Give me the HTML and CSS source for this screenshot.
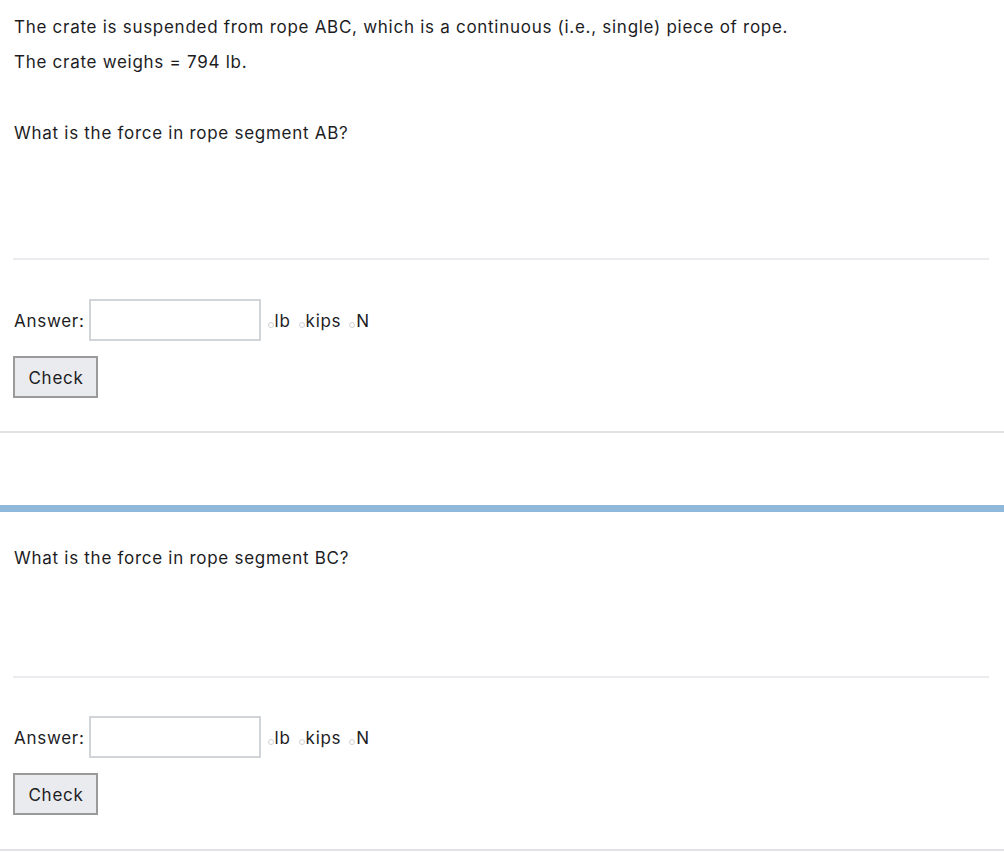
FILE: index.html
```html
<!DOCTYPE html>
<html>
<head>
<meta charset="utf-8">
<link rel="stylesheet" href="styles.css">
</head>
<body>
<div class="intro">
  <p class="line">The crate is suspended from rope ABC, which is a continuous (i.e., single) piece of rope.</p>
  <p class="line second">The crate weighs = 794 lb.</p>
</div>
<div class="part first-part">
  <div class="inner">
    <p class="line question">What is the force in rope segment AB?</p>
    <div class="divider"></div>
    <div class="answer-row">
      <label class="answer-label">Answer:</label>
      <input class="answer-input" type="text">
      <span class="units">
        <span class="unit"><input type="radio" name="u1" class="radio">lb</span>
        <span class="unit"><input type="radio" name="u1" class="radio">kips</span>
        <span class="unit"><input type="radio" name="u1" class="radio">N</span>
      </span>
    </div>
    <button class="check">Check</button>
  </div>
  <div class="full-rule"></div>
</div>
<div class="blue-bar"></div>
<div class="part second-part">
  <div class="inner">
    <p class="line question">What is the force in rope segment BC?</p>
    <div class="divider"></div>
    <div class="answer-row">
      <label class="answer-label">Answer:</label>
      <input class="answer-input" type="text">
      <span class="units">
        <span class="unit"><input type="radio" name="u2" class="radio">lb</span>
        <span class="unit"><input type="radio" name="u2" class="radio">kips</span>
        <span class="unit"><input type="radio" name="u2" class="radio">N</span>
      </span>
    </div>
    <button class="check">Check</button>
  </div>
  <div class="full-rule"></div>
</div>
</body>
</html>
```
FILE: styles.css
```css
html, body {
  margin: 0;
  padding: 0;
  background: #fff;
}
body {
  font-family: Inter, "Liberation Sans", sans-serif;
  font-size: 17px;
  letter-spacing: 0.72px;
  color: #1d1d1f;
}
.line {
  margin: 0;
  line-height: 22px;
  height: 20px;
  white-space: nowrap;
}
.intro {
  padding: 16px 14px 0;
}
.intro .second {
  margin-top: 15px;
}
.inner {
  padding: 0 15px 0 13px;
}
.first-part .question {
  margin-top: 51px;
  padding-left: 1px;
}
.first-part .divider {
  margin-top: 116px;
}
.divider {
  height: 2px;
  background: #ebecef;
}
.answer-row {
  display: flex;
  align-items: center;
  margin-top: 39px;
  height: 42px;
}
.answer-label {
  padding-left: 1px;
  padding-top: 2px;
  margin-right: 4px;
}
.answer-input {
  box-sizing: border-box;
  width: 172px;
  height: 42px;
  border: 2px solid #d1d5da;
  margin: 0;
  padding: 0 6px;
  font: inherit;
  outline: none;
}
.units {
  display: flex;
  align-items: center;
  margin-left: 7px;
  padding-top: 2px;
}
.unit {
  display: inline-flex;
  align-items: baseline;
  margin-right: 8px;
}
.radio {
  appearance: none;
  -webkit-appearance: none;
  box-sizing: border-box;
  width: 6px;
  height: 6px;
  margin: 0 1px 0 0;
  border: 1px solid #cfd2d6;
  border-radius: 50%;
  background: #fff;
  position: relative;
  top: 1px;
}
.check {
  display: block;
  box-sizing: border-box;
  margin: 15px 0 0;
  width: 85px;
  height: 42px;
  background: #eaebef;
  border: 2px solid #9a9a9a;
  border-radius: 0;
  font: inherit;
  letter-spacing: 0.72px;
  color: #1d1d1f;
  padding: 2px 0 0 1px;
}
.full-rule {
  height: 2px;
  background: #e0e2e5;
  margin-top: 33px;
}
.blue-bar {
  height: 7px;
  background: #8fb8db;
  margin-top: 72px;
}
.second-part .question {
  margin-top: 35px;
  padding-left: 1px;
}
.second-part .divider {
  margin-top: 109px;
}
.second-part .answer-row {
  margin-top: 38px;
}
.second-part .full-rule {
  margin-top: 34px;
}
```
